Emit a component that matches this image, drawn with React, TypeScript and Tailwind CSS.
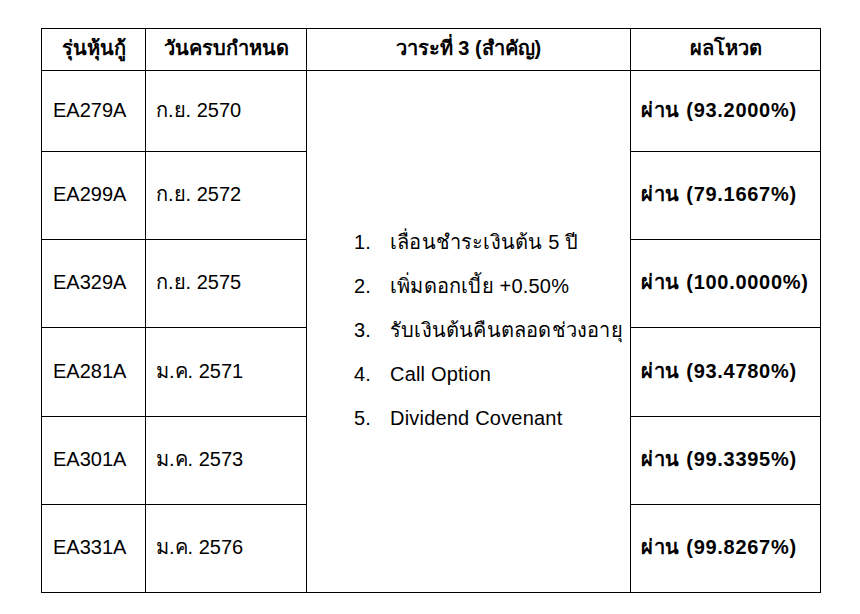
const rows = [
  { code: 'EA279A', date: 'ก.ย. 2570', result: 'ผ่าน (93.2000%)', h: 'h-[81px]' },
  { code: 'EA299A', date: 'ก.ย. 2572', result: 'ผ่าน (79.1667%)', h: 'h-[88px]' },
  { code: 'EA329A', date: 'ก.ย. 2575', result: 'ผ่าน (100.0000%)', h: 'h-[88px]' },
  { code: 'EA281A', date: 'ม.ค. 2571', result: 'ผ่าน (93.4780%)', h: 'h-[89px]' },
  { code: 'EA301A', date: 'ม.ค. 2573', result: 'ผ่าน (99.3395%)', h: 'h-[88px]' },
  { code: 'EA331A', date: 'ม.ค. 2576', result: 'ผ่าน (99.8267%)', h: 'h-[88px]' },
];

const agenda = [
  'เลื่อนชำระเงินต้น 5 ปี',
  'เพิ่มดอกเบี้ย +0.50%',
  'รับเงินต้นคืนตลอดช่วงอายุ',
  'Call Option',
  'Dividend Covenant',
];

export default function App() {
  return (
    <div className="w-[860px] h-[614px] bg-white pt-[28px] pl-[41px] font-['Liberation_Sans',Arial,sans-serif] text-black">
      <table className="border-collapse text-[20px] leading-[24px]">
        <thead>
          <tr className="h-[42px]">
            <th className="w-[104px] border border-black pb-[3px] text-center font-bold">รุ่นหุ้นกู้</th>
            <th className="w-[161px] border border-black pb-[3px] text-center font-bold">วันครบกำหนด</th>
            <th className="w-[324px] border border-black pb-[3px] text-center font-bold">วาระที่ 3 (สำคัญ)</th>
            <th className="w-[190px] border border-black pb-[3px] text-center font-bold">ผลโหวต</th>
          </tr>
        </thead>
        <tbody>
          {rows.map((r, i) => (
            <tr key={r.code} className={r.h}>
              <td className="border border-black pl-[11px] pb-[3px] align-middle">{r.code}</td>
              <td className="border border-black pl-[10px] pb-[3px] align-middle">{r.date}</td>
              {i === 0 && (
                <td rowSpan={6} className="border border-black align-middle pl-[47px] pb-[3px]">
                  <ol className="flex flex-col tracking-[0.2px]">
                    {agenda.map((a, j) => (
                      <li key={a} className="flex h-[44px] items-center">
                        <span className="w-[36px]">{j + 1}.</span>
                        <span>{a}</span>
                      </li>
                    ))}
                  </ol>
                </td>
              )}
              <td className="border border-black pl-[10px] pb-[3px] align-middle font-bold tracking-[0.7px]">{r.result}</td>
            </tr>
          ))}
        </tbody>
      </table>
    </div>
  );
}
